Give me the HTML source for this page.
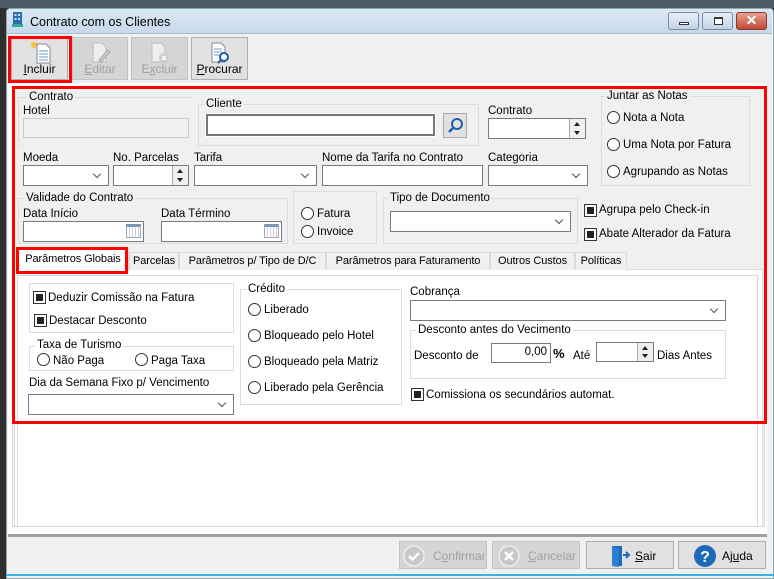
<!DOCTYPE html>
<html><head><meta charset="utf-8"><style>
*{box-sizing:border-box;margin:0;padding:0}
body{width:774px;height:579px;overflow:hidden;background:#2e2e2e;font-family:"Liberation Sans",sans-serif;font-size:11.5px;color:#000;position:relative}
.a{position:absolute}
.t{position:absolute;white-space:nowrap;font-size:11.5px;line-height:14px}
.inp{position:absolute;background:#fff;border:1px solid #7a7a7a}
.grp{position:absolute;border:1px solid #dcdcdc}
.gl{position:absolute;background:#f0f0f0;padding:0 2px;line-height:13px;white-space:nowrap}
.wl{background:#fff}
.rad{position:absolute;width:13px;height:13px;border:1px solid #333;border-radius:50%;background:#fff}
.chk{position:absolute;width:13px;height:13px;border:1px solid #333;background:#fff}
.chk:after{content:"";position:absolute;left:2px;top:2px;width:7px;height:7px;background:#222}
.dd:after{content:"";position:absolute;right:8px;top:5px;width:5px;height:5px;border-right:1px solid #555;border-bottom:1px solid #555;transform:rotate(45deg)}
.spin{position:absolute;right:0;top:0;width:16px;height:100%;border-left:1px solid #aaa;background:#f0f0f0}
.spin:before{content:"";position:absolute;left:4px;top:3px;border:3px solid transparent;border-bottom:4px solid #222;border-top:0}
.spin:after{content:"";position:absolute;left:4px;bottom:3px;border:3px solid transparent;border-top:4px solid #222;border-bottom:0}
.cal{position:absolute;right:2px;top:2px;width:15px;height:14px;border:1px solid #9ab;background:repeating-linear-gradient(90deg,#fff 0 2px,#ccd 2px 3px);border-top:3px solid #7899b8}
.tb{position:absolute;top:37px;height:43px;border:1px solid #adadad;background:#e1e1e1;text-align:center}
.tb span{position:absolute;left:0;right:0;bottom:3px;font-size:12px}
.tab{position:absolute;top:252px;height:18px;border:1px solid #d9d9d9;border-bottom:none;background:#f0f0f0;text-align:center;line-height:16px;white-space:nowrap;font-size:11px;letter-spacing:-0.1px}
.bb{position:absolute;top:541px;height:28px;border:1px solid #adadad;background:#e1e1e1}
.bb span{position:absolute;top:7px;font-size:12px}
</style></head><body>
<div class="a" style="left:0;top:0;width:774px;height:8px;background:#4b5b63"></div>
<div class="a" style="left:6px;top:8px;width:768px;height:571px;background:#f0f0f0;border:1px solid #8aa;border-radius:4px 4px 0 0"></div>
<div class="a" style="left:7px;top:9px;width:765px;height:25px;background:linear-gradient(#dbe8f5,#c7d9ec);border-radius:4px 4px 0 0;border-bottom:1px solid #a8bacb"></div>
<svg class="a" style="left:12px;top:12px" width="12" height="16"><rect x="1" y="0" width="9" height="12" fill="#2b6cb0"/><g fill="#cde"><rect x="2.5" y="2" width="2" height="2"/><rect x="6" y="2" width="2" height="2"/><rect x="2.5" y="6" width="2" height="2"/><rect x="6" y="6" width="2" height="2"/></g><rect x="0" y="12" width="11" height="3" fill="#3a9"/></svg>
<div class="t" style="left:30px;top:15px;font-size:12.5px">Contrato com os Clientes</div>
<div class="a" style="left:668px;top:12px;width:31px;height:18px;border:1px solid #7a8ea3;border-radius:3px;background:linear-gradient(#e8f0f8,#c3d3e4)"><div class="a" style="left:10px;top:9px;width:10px;height:3px;border:1px solid #334;background:#fff"></div></div>
<div class="a" style="left:702px;top:12px;width:31px;height:18px;border:1px solid #7a8ea3;border-radius:3px;background:linear-gradient(#e8f0f8,#c3d3e4)"><div class="a" style="left:11px;top:4px;width:9px;height:8px;border:1px solid #334;border-top-width:2px;background:#fff"></div></div>
<div class="a" style="left:736px;top:12px;width:31px;height:18px;border:1px solid #8b3a2e;border-radius:3px;background:linear-gradient(#e8a090,#c04a35);color:#fff;font-weight:bold;text-align:center;line-height:15px;font-size:14px">✕</div>
<div class="tb" style="left:11px;width:57px"><svg class="a" style="left:17px;top:2px" width="24" height="24"><circle cx="5" cy="5" r="3" fill="#f8c040"/><path d="M8 4h9l4 4v15H8z" fill="#fff" stroke="#888"/><g stroke="#6a9bd0"><path d="M10 11h9M10 14h9M10 17h9M10 20h9"/></g></svg><span><u>I</u>ncluir</span></div>
<div class="tb" style="left:72px;width:56px;background:#d5d5d5;border-color:#c3c3c3;color:#a0a0a0"><svg class="a" style="left:16px;top:2px" width="24" height="24"><path d="M4 3h9l4 4v15H4z" fill="#eee" stroke="#bbb"/><path d="M10 20l9-10 2 2-9 10z" fill="#ccc" stroke="#aaa"/></svg><span><u>E</u>ditar</span></div>
<div class="tb" style="left:131px;width:57px;background:#d5d5d5;border-color:#c3c3c3;color:#a0a0a0"><svg class="a" style="left:16px;top:2px" width="24" height="24"><path d="M4 3h9l4 4v15H4z" fill="#eee" stroke="#bbb"/><circle cx="16" cy="18" r="5" fill="#ccc"/><path d="M14 16l4 4M18 16l-4 4" stroke="#fff" stroke-width="1.5"/></svg><span>E<u>x</u>cluir</span></div>
<div class="tb" style="left:191px;width:57px"><svg class="a" style="left:16px;top:2px" width="24" height="24"><path d="M4 3h9l4 4v15H4z" fill="#fff" stroke="#888"/><g stroke="#6a9bd0"><path d="M6 9h8M6 12h8M6 15h6"/></g><circle cx="16" cy="17" r="4" fill="#fff" stroke="#1e5fa8" stroke-width="2"/><path d="M13 20l-3 3" stroke="#1e5fa8" stroke-width="2"/></svg><span><u>P</u>rocurar</span></div>
<div class="a" style="left:8px;top:36px;width:64px;height:47px;border:3px solid #f00"></div>
<div class="a" style="left:8px;top:83px;width:759px;height:452px;background:#fff"></div>
<div class="a" style="left:12px;top:87px;width:753px;height:440px;border:1px solid #ddd;background:#f0f0f0"></div>
<div class="a" style="left:14px;top:269px;width:749px;height:258px;background:#fff;border:1px solid #ddd"></div>
<div class="a" style="left:8px;top:534px;width:759px;height:3px;background:#a0a0a0"></div>

<div class="grp" style="left:18px;top:97px;width:175px;height:50px;border-right:none;border-bottom:none"></div>
<div class="gl" style="left:27px;top:91px">Contrato</div>
<div class="t" style="left:23px;top:104px">Hotel</div>
<div class="a" style="left:23px;top:118px;width:166px;height:20px;border:1px solid #ccc;background:#f0f0f0"></div>
<div class="grp" style="left:198px;top:104px;width:281px;height:42px"></div>
<div class="gl" style="left:204px;top:98px">Cliente</div>
<div class="inp" style="left:206px;top:114px;width:229px;height:22px;border:2px solid #777;outline:1px solid #fff"></div>
<div class="a" style="left:443px;top:113px;width:24px;height:25px;border:1px solid #aaa;background:#e1e1e1"><svg width="22" height="23"><circle cx="13" cy="10" r="5" fill="none" stroke="#1e5fa8" stroke-width="2"/><path d="M9 14l-4 4" stroke="#1e5fa8" stroke-width="2.5"/></svg></div>
<div class="t" style="left:488px;top:104px">Contrato</div>
<div class="inp" style="left:488px;top:118px;width:98px;height:21px"><div class="spin"></div></div>
<div class="grp" style="left:601px;top:96px;width:149px;height:90px"></div>
<div class="gl" style="left:605px;top:90px">Juntar as Notas</div>
<div class="rad" style="left:607px;top:111px"></div><div class="t" style="left:623px;top:111px">Nota a Nota</div>
<div class="rad" style="left:607px;top:138px"></div><div class="t" style="left:623px;top:138px">Uma Nota por Fatura</div>
<div class="rad" style="left:607px;top:165px"></div><div class="t" style="left:623px;top:165px">Agrupando as Notas</div>

<div class="t" style="left:23px;top:151px">Moeda</div>
<div class="t" style="left:113px;top:151px">No. Parcelas</div>
<div class="t" style="left:194px;top:151px">Tarifa</div>
<div class="t" style="left:322px;top:151px">Nome da Tarifa no Contrato</div>
<div class="t" style="left:488px;top:151px">Categoria</div>
<div class="inp dd" style="left:23px;top:165px;width:86px;height:21px"></div>
<div class="inp" style="left:113px;top:165px;width:76px;height:21px"><div class="spin"></div></div>
<div class="inp dd" style="left:194px;top:165px;width:123px;height:21px"></div>
<div class="inp" style="left:322px;top:165px;width:161px;height:21px"></div>
<div class="inp dd" style="left:488px;top:165px;width:100px;height:21px"></div>

<div class="grp" style="left:18px;top:198px;width:270px;height:46px"></div>
<div class="gl" style="left:24px;top:192px">Validade do Contrato</div>
<div class="t" style="left:23px;top:207px">Data Início</div>
<div class="t" style="left:161px;top:207px">Data Término</div>
<div class="inp" style="left:23px;top:221px;width:121px;height:21px"><div class="cal"></div></div>
<div class="inp" style="left:161px;top:221px;width:121px;height:21px"><div class="cal"></div></div>
<div class="grp" style="left:293px;top:191px;width:84px;height:53px"></div>
<div class="rad" style="left:301px;top:207px"></div><div class="t" style="left:317px;top:207px">Fatura</div>
<div class="rad" style="left:301px;top:225px"></div><div class="t" style="left:317px;top:225px">Invoice</div>
<div class="grp" style="left:383px;top:198px;width:195px;height:46px"></div>
<div class="gl" style="left:388px;top:192px">Tipo de Documento</div>
<div class="inp dd" style="left:390px;top:211px;width:181px;height:21px"></div>
<div class="chk" style="left:584px;top:204px"></div><div class="t" style="left:599px;top:203px">Agrupa pelo Check-in</div>
<div class="chk" style="left:584px;top:228px"></div><div class="t" style="left:599px;top:227px">Abate Alterador da Fatura</div>

<div class="tab" style="left:129px;width:50px">Parcelas</div>
<div class="tab" style="left:179px;width:147px">Parâmetros p/ Tipo de D/C</div>
<div class="tab" style="left:326px;width:164px">Parâmetros para Faturamento</div>
<div class="tab" style="left:490px;width:85px">Outros Custos</div>
<div class="tab" style="left:575px;width:52px">Políticas</div>
<div class="tab" style="left:17px;top:248px;width:112px;height:23px;background:#fff;line-height:20px;border-color:#d9d9d9">Parâmetros Globais</div>
<div class="a" style="left:17px;top:275px;width:741px;height:252px;border:1px solid #d9d9d9;background:#fff"></div>
<div class="a" style="left:16px;top:247px;width:112px;height:27px;border:3px solid #f00"></div>

<div class="grp" style="left:29px;top:283px;width:205px;height:50px"></div>
<div class="chk" style="left:33px;top:291px"></div><div class="t" style="left:48px;top:291px">Deduzir Comissão na Fatura</div>
<div class="chk" style="left:34px;top:314px"></div><div class="t" style="left:49px;top:314px">Destacar Desconto</div>
<div class="grp" style="left:29px;top:346px;width:205px;height:25px"></div>
<div class="gl wl" style="left:35px;top:339px">Taxa de Turismo</div>
<div class="rad" style="left:37px;top:353px"></div><div class="t" style="left:53px;top:354px">Não Paga</div>
<div class="rad" style="left:135px;top:353px"></div><div class="t" style="left:151px;top:354px">Paga Taxa</div>
<div class="t" style="left:29px;top:376px">Dia da Semana Fixo p/ Vencimento</div>
<div class="inp dd" style="left:28px;top:394px;width:206px;height:21px"></div>
<div class="grp" style="left:240px;top:289px;width:162px;height:116px"></div>
<div class="gl wl" style="left:246px;top:283px">Crédito</div>
<div class="rad" style="left:248px;top:303px"></div><div class="t" style="left:264px;top:303px">Liberado</div>
<div class="rad" style="left:248px;top:329px"></div><div class="t" style="left:264px;top:329px">Bloqueado pelo Hotel</div>
<div class="rad" style="left:248px;top:355px"></div><div class="t" style="left:264px;top:355px">Bloqueado pela Matriz</div>
<div class="rad" style="left:248px;top:381px"></div><div class="t" style="left:264px;top:381px">Liberado pela Gerência</div>
<div class="t" style="left:410px;top:285px">Cobrança</div>
<div class="inp dd" style="left:410px;top:300px;width:316px;height:21px"></div>
<div class="grp" style="left:410px;top:330px;width:316px;height:49px"></div>
<div class="gl wl" style="left:416px;top:324px">Desconto antes do Vecimento</div>
<div class="t" style="left:414px;top:349px">Desconto de</div>
<div class="inp" style="left:491px;top:343px;width:60px;height:20px;text-align:right;padding-right:3px;line-height:16px">0,00</div>
<div class="t" style="left:553px;top:347px;font-weight:bold;font-size:13px">%</div>
<div class="t" style="left:573px;top:349px">Até</div>
<div class="inp" style="left:596px;top:342px;width:58px;height:20px"><div class="spin"></div></div>
<div class="t" style="left:657px;top:349px">Dias Antes</div>
<div class="chk" style="left:411px;top:388px"></div><div class="t" style="left:426px;top:388px">Comissiona os secundários automat.</div>

<div class="a" style="left:12px;top:86px;width:755px;height:338px;border:3px solid #f00"></div>

<div class="bb" style="left:399px;width:88px;background:#d5d5d5;border-color:#c3c3c3;color:#a0a0a0"><svg class="a" style="left:2px;top:2px" width="24" height="24"><circle cx="12" cy="12" r="10" fill="#c8c8c8" stroke="#eee" stroke-width="1.5"/><path d="M7 12l3.5 3.5L17 9" fill="none" stroke="#fff" stroke-width="2.5"/></svg><span style="left:33px">C<u>o</u>nfirmar</span></div>
<div class="bb" style="left:492px;width:88px;background:#d5d5d5;border-color:#c3c3c3;color:#a0a0a0"><svg class="a" style="left:4px;top:2px" width="24" height="24"><circle cx="12" cy="12" r="10" fill="#c8c8c8" stroke="#eee" stroke-width="1.5"/><path d="M8 8l8 8M16 8l-8 8" stroke="#fff" stroke-width="2.5"/></svg><span style="left:35px"><u>C</u>ancelar</span></div>
<div class="bb" style="left:586px;width:88px"><svg class="a" style="left:22px;top:2px" width="24" height="24"><path d="M3 2h10v20H3z" fill="#1e6ab8"/><path d="M3 2l7 3v18l-7-1z" fill="#2b7fd0"/><path d="M14 11h5M17 8l3 3-3 3" fill="none" stroke="#1e6ab8" stroke-width="2"/></svg><span style="left:48px"><u>S</u>air</span></div>
<div class="bb" style="left:678px;width:88px"><svg class="a" style="left:14px;top:2px" width="24" height="24"><circle cx="12" cy="12" r="11" fill="#1e6ab8"/><text x="12" y="18" text-anchor="middle" fill="#fff" font-size="16" font-weight="bold" font-family="Liberation Sans">?</text></svg><span style="left:43px">Aj<u>u</u>da</span></div>
<div class="a" style="left:6px;top:574px;width:768px;height:2px;background:#37b4e0"></div>
</body></html>
